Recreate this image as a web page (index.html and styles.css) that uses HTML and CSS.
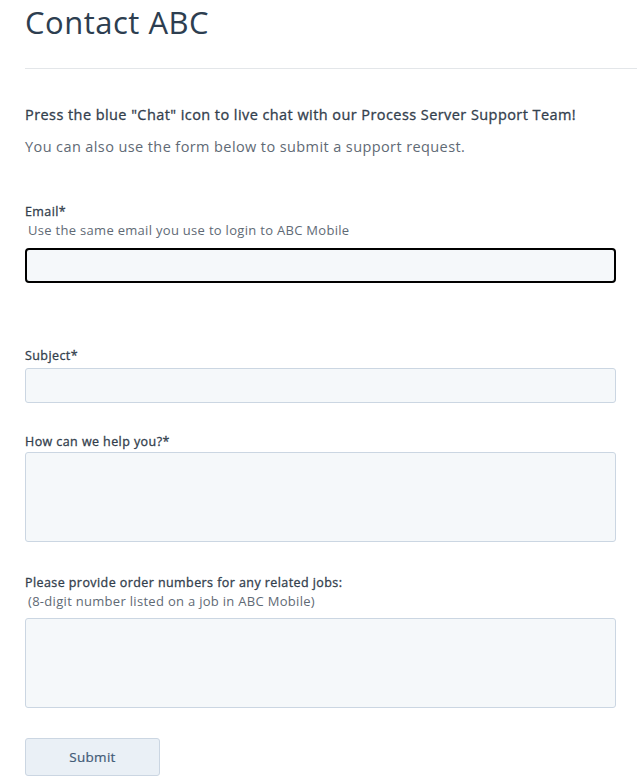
FILE: index.html
```html
<!DOCTYPE html>
<html lang="en">
<head>
<meta charset="utf-8">
<title>Contact ABC</title>
<link rel="stylesheet" href="styles.css">
</head>
<body>
<div class="page">
  <h1 class="title">Contact ABC</h1>
  <hr class="rule">
  <p class="lead">Press the blue "Chat" icon to live chat with our Process Server Support Team!</p>
  <p class="sub">You can also use the form below to submit a support request.</p>
  <form class="form">
    <div class="field field-email">
      <label class="label">Email*</label>
      <div class="hint">Use the same email you use to login to ABC Mobile</div>
      <input class="input input-focus" type="text">
    </div>
    <div class="field field-subject">
      <label class="label">Subject*</label>
      <input class="input" type="text">
    </div>
    <div class="field field-help">
      <label class="label">How can we help you?*</label>
      <textarea class="input area"></textarea>
    </div>
    <div class="field field-orders">
      <label class="label">Please provide order numbers for any related jobs:</label>
      <div class="hint">(8-digit number listed on a job in ABC Mobile)</div>
      <textarea class="input area"></textarea>
    </div>
    <button class="submit" type="button">Submit</button>
  </form>
</div>
</body>
</html>
```
FILE: styles.css
```css
html, body {
  margin: 0;
  padding: 0;
  background: #ffffff;
}
body {
  font-family: "Open Sans", "DejaVu Sans", sans-serif;
  color: #33475b;
}
.page {
  padding-left: 25px;
}
.title {
  margin: 0;
  padding-top: 2px;
  font-size: 31px;
  line-height: 40px;
  font-weight: 500;
  letter-spacing: 0.5px;
  color: #2d3e50;
}
.rule {
  margin: 26px 0 0 0;
  border: 0;
  border-top: 1px solid #e3e6e9;
  height: 0;
}
.lead {
  margin: 36px 0 0 0;
  font-size: 14.5px;
  line-height: 20px;
  font-weight: 400;
  letter-spacing: 0.43px;
  -webkit-text-stroke: 0.3px currentColor;
  color: #33404d;
}
.sub {
  margin: 12px 0 0 0;
  font-size: 14.5px;
  line-height: 20px;
  font-weight: 400;
  letter-spacing: 0.4px;
  color: #5f6a75;
}
.form {
  padding-right: 21px;
  margin-top: 46px;
}
.field {
  display: flex;
  flex-direction: column;
}
.label {
  font-size: 12.5px;
  line-height: 18px;
  font-weight: 400;
  letter-spacing: 0.42px;
  -webkit-text-stroke: 0.3px currentColor;
  color: #33404d;
}
.hint {
  font-size: 13px;
  line-height: 18px;
  letter-spacing: 0.3px;
  color: #5f6a75;
  padding-left: 3px;
}
.input {
  box-sizing: border-box;
  width: 100%;
  height: 35px;
  margin: 0;
  background: #f5f8fa;
  border: 1px solid #cbd6e2;
  border-radius: 3px;
  font: inherit;
  padding: 0 8px;
}
.field-email .hint { margin-bottom: 9px; }
.field-subject .label { margin-bottom: 3px; }
.field-help .label { margin-bottom: 1px; }
.field-orders .hint { margin-bottom: 8px; }
.input-focus {
  border: 2px solid #000000;
  border-radius: 4px;
}
.area {
  height: 90px;
  resize: none;
  display: block;
}
.field-subject { margin-top: 64px; }
.field-help { margin-top: 30px; }
.field-orders { margin-top: 32px; }
.submit {
  margin-top: 30px;
  width: 135px;
  height: 38px;
  background: #eaf0f6;
  border: 1px solid #cbd6e2;
  border-radius: 3px;
  font-family: inherit;
  font-size: 13.5px;
  font-weight: 400;
  letter-spacing: 0.3px;
  -webkit-text-stroke: 0.2px currentColor;
  color: #425b76;
}
```
